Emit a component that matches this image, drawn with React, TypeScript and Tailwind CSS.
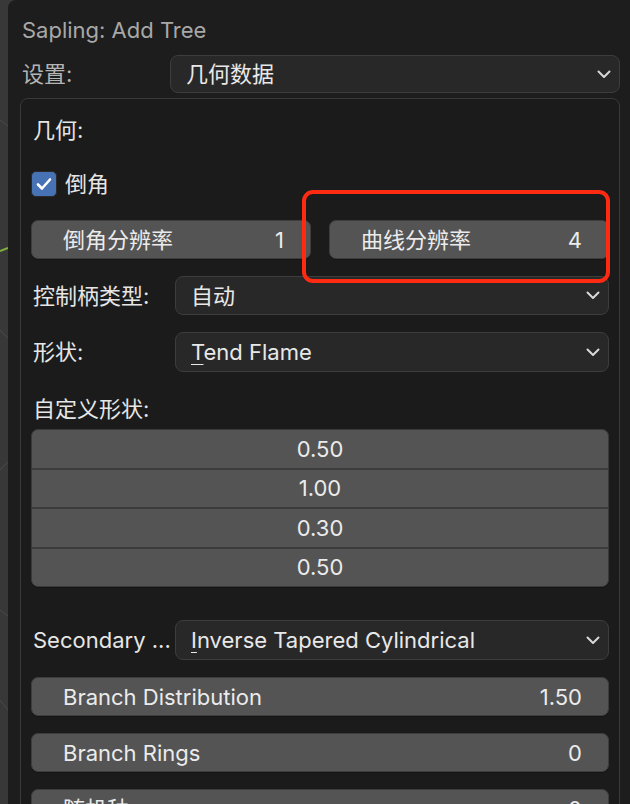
import type { ReactNode } from 'react';

const font = { fontFamily: 'Inter, "Noto Sans CJK SC", "Noto Sans", sans-serif' };

function Chevron() {
  return (
    <svg width="14" height="9" viewBox="0 0 14 9" className="shrink-0">
      <path d="M1.5 1.5l5.5 5.5 5.5-5.5" fill="none" stroke="#d8d8d8" strokeWidth="2" strokeLinecap="round" strokeLinejoin="round" />
    </svg>
  );
}

function Dropdown({ children, className = '' }: { children: ReactNode; className?: string }) {
  return (
    <div className={`flex flex-1 items-center justify-between rounded-[8px] border border-[#3d3d3d] bg-[#282828] pl-[15px] pr-[8px] text-[#e8e8e8] ${className}`}>
      <span>{children}</span>
      <Chevron />
    </div>
  );
}

function Field({ label, value, className = '' }: { label: string; value: string; className?: string }) {
  return (
    <div className={`flex flex-1 items-center justify-between rounded-[7px] border border-[#3e3e3e] bg-[#545454] pl-[31px] pr-[26px] text-[#ebebeb] shadow-[0_1px_0_#141414] ${className}`}>
      <span>{label}</span>
      <span>{value}</span>
    </div>
  );
}

function Row({ label, children, className = '' }: { label: string; children: ReactNode; className?: string }) {
  return (
    <div className={`flex items-stretch ${className}`}>
      <div className="flex w-[144px] shrink-0 items-center pl-[2px] text-[#e6e6e6]">{label}</div>
      {children}
    </div>
  );
}

export default function App() {
  return (
    <div className="flex h-[804px] w-[630px] overflow-hidden bg-[#383838] text-[22px] leading-[24px]" style={font}>
      <svg width="8" height="804" className="shrink-0">
        <path d="M0 120l8 6M0 330l8 8M0 470l8 -8M0 610l8 6M0 700l8 10" stroke="#4a4a4a" strokeWidth="1" />
        <path d="M0 251l8 -3" stroke="#7fb23a" strokeWidth="2" />
      </svg>
      <div className="relative flex-1 rounded-tl-[8px] bg-[#1d1d1d] pl-[12px] pr-[10px]">
        <div className="pt-[18px] pl-[2px] text-[#a8a8a8]">Sapling: Add Tree</div>

        <div className="mt-[13px] flex h-[38px]">
          <div className="flex w-[150px] shrink-0 items-center pl-[2px] text-[#b4b4b4]">设置:</div>
          <Dropdown>几何数据</Dropdown>
        </div>

        <div className="mt-[5px] h-[760px] rounded-t-[8px] border border-[#3a3a3a] bg-[#1b1b1b] px-[10px]">
          <div className="pt-[19px] pl-[2px] text-[#e6e6e6]">几何:</div>

          <div className="mt-[29px] flex h-[26px] items-center gap-[8px]">
            <div className="flex h-[26px] w-[26px] items-center justify-center rounded-[5px] border border-[#2a2a2a] bg-[#4772b3]">
              <svg width="16" height="14" viewBox="0 0 16 14">
                <path d="M2 7.5l4 4 8-9" fill="none" stroke="#ffffff" strokeWidth="2.6" strokeLinecap="round" strokeLinejoin="round" />
              </svg>
            </div>
            <span className="text-[#e6e6e6]">倒角</span>
          </div>

          <div className="mt-[23px] flex h-[39px] gap-[18px]">
            <Field label="倒角分辨率" value="1" />
            <Field label="曲线分辨率" value="4" />
          </div>

          <Row label="控制柄类型:" className="mt-[17px] h-[39px]">
            <Dropdown>自动</Dropdown>
          </Row>

          <Row label="形状:" className="mt-[17px] h-[40px]">
            <Dropdown>
              <span className="underline decoration-1 underline-offset-[4px]">T</span>end Flame
            </Dropdown>
          </Row>

          <div className="mt-[25px] pl-[2px] text-[#e6e6e6]">自定义形状:</div>

          <div className="mt-[8px] flex h-[158px] flex-col overflow-hidden rounded-[7px] border border-[#3a3a3a] bg-[#545454] text-[#ebebeb] shadow-[0_1px_0_#141414]">
            {['0.50', '1.00', '0.30', '0.50'].map((v, i) => (
              <div key={i} className={`flex flex-1 items-center justify-center ${i > 0 ? 'border-t-2 border-[#3c3c3c]' : ''}`}>
                {v}
              </div>
            ))}
          </div>

          <Row label="Secondary ..." className="mt-[33px] h-[40px]">
            <Dropdown>
              <span className="underline decoration-1 underline-offset-[4px]">I</span>nverse Tapered Cylindrical
            </Dropdown>
          </Row>

          <div className="mt-[17px] flex h-[39px]">
            <Field label="Branch Distribution" value="1.50" />
          </div>
          <div className="mt-[17px] flex h-[39px]">
            <Field label="Branch Rings" value="0" />
          </div>
          <div className="mt-[17px] flex h-[39px]">
            <Field label="随机种" value="0" />
          </div>
        </div>

        <div className="absolute left-[294px] top-[190px] h-[93px] w-[308px] rounded-[11px] border-[4px] border-[#ff2a12]" />
      </div>
    </div>
  );
}
